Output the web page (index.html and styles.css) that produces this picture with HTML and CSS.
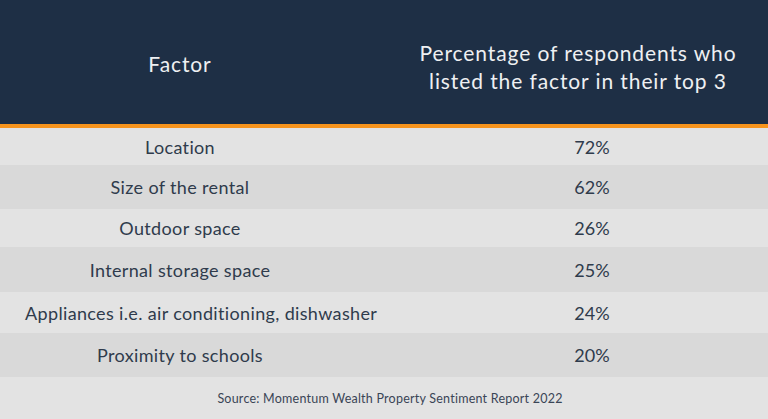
FILE: index.html
```html
<!DOCTYPE html>
<html>
<head>
<meta charset="utf-8">
<link rel="stylesheet" href="styles.css">
</head>
<body>
<div class="page">
  <div class="head">
    <div class="hcell left">Factor</div>
    <div class="hcell right">Percentage of respondents who<br>listed the factor in their top 3</div>
  </div>
  <div class="rows">
    <div class="row"><div class="cell left">Location</div><div class="cell val">72%</div></div>
    <div class="row"><div class="cell left">Size of the rental</div><div class="cell val">62%</div></div>
    <div class="row"><div class="cell left">Outdoor space</div><div class="cell val">26%</div></div>
    <div class="row"><div class="cell left">Internal storage space</div><div class="cell val">25%</div></div>
    <div class="row"><div class="cell left">Appliances i.e. air conditioning, dishwasher</div><div class="cell val">24%</div></div>
    <div class="row"><div class="cell left">Proximity to schools</div><div class="cell val">20%</div></div>
  </div>
  <div class="foot">Source: Momentum Wealth Property Sentiment Report 2022</div>
</div>
</body>
</html>
```
FILE: styles.css
```css
html, body {
  margin: 0;
  padding: 0;
}
body {
  width: 768px;
  height: 419px;
  overflow: hidden;
  background: #e3e3e3;
  font-family: "Lato", "Liberation Sans", sans-serif;
}
.page {
  display: flex;
  flex-direction: column;
  height: 419px;
}
.head {
  height: 124px;
  background: #1e2f45;
  border-bottom: 4px solid #f7941d;
  display: grid;
  grid-template-columns: 360px 1fr;
  align-items: center;
  color: #eef0f2;
  font-size: 21px;
  line-height: 28px;
  letter-spacing: 0.9px;
}
.hcell {
  text-align: center;
}
.hcell.left {
  padding: 4px 25px 0;
}
.hcell.right {
  padding-left: 28px;
  padding-top: 10px;
}
.rows {
  display: flex;
  flex-direction: column;
}
.row {
  display: grid;
  grid-template-columns: 360px 1fr;
  align-items: center;
  color: #2f3b4c;
  font-size: 18px;
  letter-spacing: 0.35px;
  background: #e3e3e3;
}
.row:nth-child(even) {
  background: #d9d9d9;
}
.row:nth-child(1) { height: 37px; }
.row:nth-child(2) { height: 44px; }
.row:nth-child(3) { height: 38px; }
.row:nth-child(4) { height: 45px; }
.row:nth-child(5) { height: 41px; }
.row:nth-child(6) { height: 44px; }
.cell.left {
  padding: 0 25px;
  text-align: center;
  white-space: nowrap;
}
.cell.val {
  padding-left: 56px;
  text-align: center;
  letter-spacing: 0;
}
.foot {
  flex: 1;
  display: flex;
  align-items: center;
  justify-content: center;
  padding-left: 12px;
  font-size: 12.5px;
  letter-spacing: 0.23px;
  color: #3a4556;
}
```
